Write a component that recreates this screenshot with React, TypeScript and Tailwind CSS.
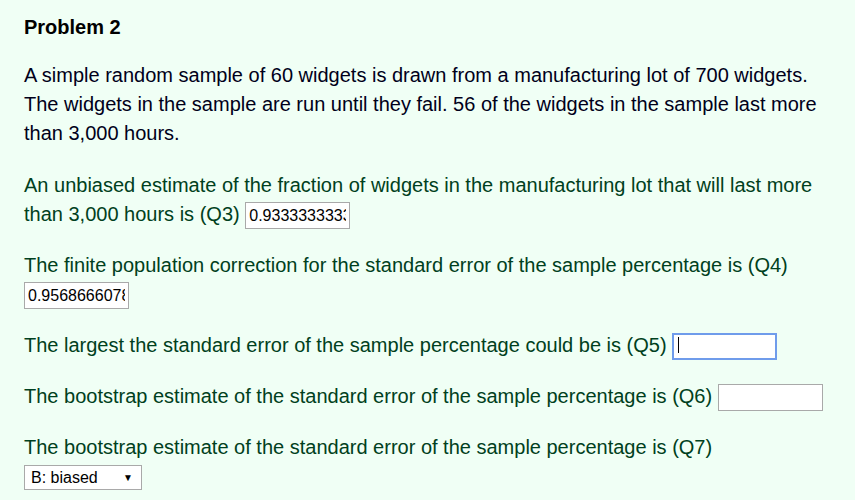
export default function App() {
  const text = 'text-[#004020]'
  const base =
    'w-[105px] h-[27px] bg-white px-[3px] text-[16px] text-black outline-none align-baseline'
  const box = `${base} border border-[#a9a9a9]`

  return (
    <div className="min-h-[500px] bg-[#f0fff5] px-6 pt-[13px] font-['Liberation_Sans',Arial,sans-serif] text-[20px] leading-[29px]">
      <h3 className="font-bold text-black">Problem 2</h3>

      <p className="mt-[19px] text-[#00001a]">
        A simple random sample of 60 widgets is drawn from a manufacturing lot of 700 widgets.
        The widgets in the sample are run until they fail. 56 of the widgets in the sample last more
        than 3,000 hours.
      </p>

      <p className={`mt-[23px] ${text}`}>
        An unbiased estimate of the fraction of widgets in the manufacturing lot that will last more
        than 3,000 hours is (Q3){' '}
        <input readOnly value="0.9333333333333333" className={box} />
      </p>

      <p className={`mt-[22px] ${text}`}>
        The finite population correction for the standard error of the sample percentage is (Q4)
        <br />
        <input readOnly value="0.956866607842" className={box} />
      </p>

      <p className={`mt-[22px] ${text}`}>
        The largest the standard error of the sample percentage could be is (Q5){' '}
        <span className="relative inline-block align-baseline">
          <input readOnly className={`${base} border-2 border-[#6f9ceb]`} />
          <span className="absolute left-[6px] top-[6px] h-[16px] w-px bg-black" />
        </span>
      </p>

      <p className={`mt-[22px] ${text}`}>
        The bootstrap estimate of the standard error of the sample percentage is (Q6){' '}
        <input readOnly className={box} />
      </p>

      <p className={`mt-[22px] ${text}`}>
        The bootstrap estimate of the standard error of the sample percentage is (Q7)
        <br />
        <span className="inline-flex h-[25px] w-[118px] items-center justify-between border border-[#a9a9a9] bg-white pl-[6px] pr-[8px] align-middle text-[16px] leading-none text-black">
          <span>B: biased</span>
          <span className="text-[10px]">▼</span>
        </span>
      </p>
    </div>
  )
}
